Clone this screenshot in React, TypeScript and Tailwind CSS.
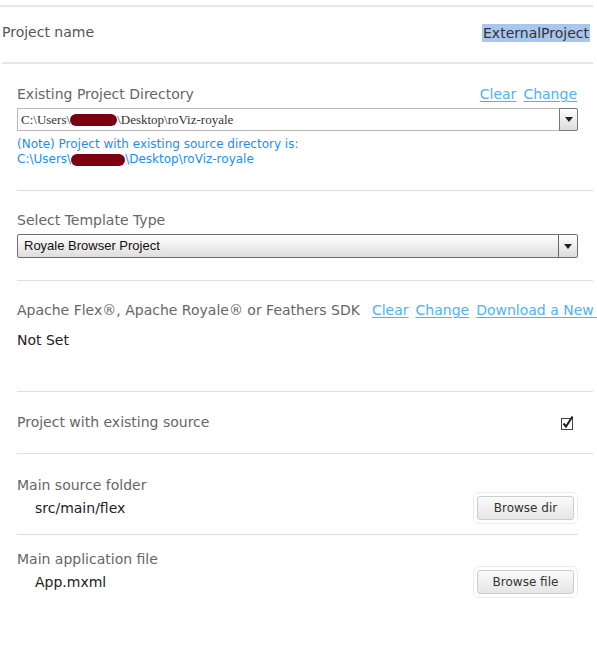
import React from 'react';

const font = { fontFamily: '"DejaVu Sans", "Noto Sans", sans-serif' };

function Divider({ className = '' }: { className?: string }) {
  return <div className={'h-[1px] bg-[#dedede] ' + className} />;
}

function Link({ children }: { children: React.ReactNode }) {
  return <span className="text-[14px] leading-[18px] text-[#4fb2f6] underline underline-offset-2 whitespace-nowrap">{children}</span>;
}

function Redacted({ w }: { w: number }) {
  return <span className="inline-block h-[12px] rounded-full bg-[#7d0012] align-middle" style={{ width: w }} />;
}

function ArrowBox({ dark }: { dark?: boolean }) {
  return (
    <div
      className={
        'w-[19px] flex items-center justify-center bg-gradient-to-b from-white to-[#dcdcdc] border-l rounded-r-[2px] ' +
        (dark ? 'border-[#666]' : 'border-[#777] border-y border-r -my-px -mr-px')
      }
    >
      <svg width="8" height="5" viewBox="0 0 8 5">
        <path d="M0 0 L8 0 L4 5 Z" fill="#222" />
      </svg>
    </div>
  );
}

function BrowseButton({ label }: { label: string }) {
  return (
    <div className="p-[3px] rounded-[6px] border border-[#ececec]">
      <div className="w-[97px] h-[24px] flex items-center justify-center rounded-[3px] border border-[#cdcdcd] bg-gradient-to-b from-[#fafafa] to-[#e6e6e6] text-[12px] text-[#333]">
        {label}
      </div>
    </div>
  );
}

export default function App() {
  return (
    <div className="w-[597px] h-[648px] bg-white overflow-hidden whitespace-nowrap" style={font}>
      <div className="h-[5px]" />
      <Divider className="mr-[4px] h-[2px] bg-[#e6e6e6]" />

      {/* project name */}
      <div className="h-[55px] flex items-center justify-between pl-[2px] pr-[7px] pb-[4px]">
        <span className="text-[14px] text-[#555]">Project name</span>
        <span className="text-[14px] leading-[18px] text-[#333] bg-[#a9c6ee] px-[1px]">ExternalProject</span>
      </div>
      <Divider className="ml-[2px] mr-[4px] h-[2px] bg-[#e6e6e6]" />

      {/* existing directory */}
      <div className="ml-[17px] mr-[20px] pt-[21px] pb-[23px]">
        <div className="flex items-center justify-between h-[18px]">
          <span className="text-[14px] text-[#666]">Existing Project Directory</span>
          <div className="flex gap-[7px]">
            <Link>Clear</Link>
            <Link>Change</Link>
          </div>
        </div>
        <div className="mt-[5px] h-[23px] flex border border-[#b9b9b9] border-r-0">
          <div
            className="flex-1 flex items-center pl-[3px] text-[13px] text-[#333]"
            style={{ fontFamily: '"Liberation Serif", serif' }}
          >
            C:\Users\<Redacted w={47} />\Desktop\roViz-royale
          </div>
          <ArrowBox />
        </div>
        <div className="mt-[6px] text-[12px] leading-[15px] text-[#1c8ef5]">
          <div>(Note) Project with existing source directory is:</div>
          <div className="flex items-center">
            C:\Users\<Redacted w={54} />\Desktop\roViz-royale
          </div>
        </div>
      </div>
      <Divider className="ml-[17px] mr-[4px]" />

      {/* template */}
      <div className="ml-[17px] mr-[19px] pt-[20px] pb-[22px]">
        <div className="h-[18px] flex items-center text-[14px] text-[#666]">Select Template Type</div>
        <div className="mt-[5px] h-[24px] flex rounded-[2px] border border-[#6e6e6e] bg-gradient-to-b from-white to-[#dedede]">
          <div
            className="flex-1 flex items-center pl-[6px] text-[13px] text-[#111]"
            style={{ fontFamily: '"Liberation Sans", Arial, sans-serif' }}
          >
            Royale Browser Project
          </div>
          <ArrowBox dark />
        </div>
      </div>
      <Divider className="ml-[17px] mr-[4px]" />

      {/* sdk */}
      <div className="ml-[17px] pt-[20px] pb-[42px]">
        <div className="h-[18px] flex items-center">
          <span className="text-[14px] text-[#666] mr-[12px]">Apache Flex®, Apache Royale® or Feathers SDK</span>
          <div className="flex gap-[7px]">
            <Link>Clear</Link>
            <Link>Change</Link>
            <Link>Download a New SDK</Link>
          </div>
        </div>
        <div className="mt-[12px] h-[18px] flex items-center text-[14px] text-[#222]">Not Set</div>
      </div>
      <Divider className="ml-[17px] mr-[4px]" />

      {/* existing source */}
      <div className="ml-[17px] mr-[22px] pt-[21px] pb-[22px] flex items-center justify-between">
        <span className="h-[18px] flex items-center text-[14px] text-[#666]">Project with existing source</span>
        <svg width="15" height="15" viewBox="0 0 15 15">
          <rect x="1.5" y="3.5" width="11" height="11" fill="#fff" stroke="#444" />
          <path d="M3.5 8.5 L6 11.5 L12.5 1.5" fill="none" stroke="#222" strokeWidth="2" />
        </svg>
      </div>
      <Divider className="ml-[17px] mr-[4px]" />

      {/* source folder */}
      <div className="ml-[17px] mr-[19px] pt-[22px] pb-[10px] flex items-start justify-between">
        <div>
          <div className="h-[18px] flex items-center text-[14px] text-[#666]">Main source folder</div>
          <div className="mt-[5px] pl-[18px] h-[18px] flex items-center text-[14px] text-[#222]">src/main/flex</div>
        </div>
        <div className="mt-[16px]">
          <BrowseButton label="Browse dir" />
        </div>
      </div>
      <Divider className="ml-[17px] mr-[19px]" />

      {/* application file */}
      <div className="ml-[17px] mr-[19px] pt-[15px] flex items-start justify-between">
        <div>
          <div className="h-[18px] flex items-center text-[14px] text-[#666]">Main application file</div>
          <div className="mt-[5px] pl-[18px] h-[18px] flex items-center text-[14px] text-[#222]">App.mxml</div>
        </div>
        <div className="mt-[16px]">
          <BrowseButton label="Browse file" />
        </div>
      </div>
    </div>
  );
}
